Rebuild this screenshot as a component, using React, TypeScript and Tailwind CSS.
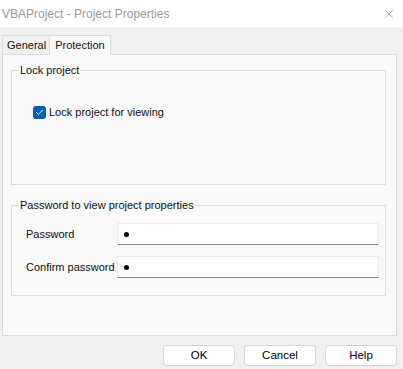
import { Check, X } from "lucide-react";

const font = { fontFamily: "'Liberation Sans', Arial, sans-serif" };

function Field({ label }: { label: string }) {
  return (
    <div className="flex items-center h-[22px]">
      <span className="w-[91px] shrink-0 whitespace-nowrap text-[11px] text-[#111]">{label}</span>
      <div className="flex-1 h-[22px] bg-white border border-[#ececec] border-b-[#8a8a8a] flex items-center pl-[6px]">
        <span className="w-[5px] h-[5px] rounded-full bg-black" />
      </div>
    </div>
  );
}

function Button({ children }: { children: string }) {
  return (
    <button className="w-[72px] h-[21px] bg-white border border-[#d4d4d4] rounded-[4px] text-[11.5px] text-black flex items-center justify-center">
      {children}
    </button>
  );
}

export default function App() {
  return (
    <div className="w-[403px] h-[369px] bg-[#f0f0f0] flex flex-col" style={font}>
      <div className="h-[27px] bg-white flex items-center justify-between pl-[2px] pr-[7px]">
        <span className="text-[12px] text-[#9a9a9a]">VBAProject - Project Properties</span>
        <X className="w-[14px] h-[14px] text-[#8a8a8a]" strokeWidth={1.1} />
      </div>

      <div className="pl-[2px] pr-[6px] pt-[7px]">
        <div className="flex items-end h-[20px]">
          <div className="h-[19px] pl-[4px] pr-[3px] border border-b-0 border-[#dcdcdc] bg-[#f0f0f0] text-[11px] text-[#111] flex items-center">
            General
          </div>
          <div className="h-[20px] px-[5px] border border-b-0 border-l-0 border-[#dcdcdc] bg-[#f9f9f9] text-[11px] text-[#111] flex items-center -mb-px relative z-10">
            Protection
          </div>
        </div>
        <div className="h-[282px] bg-[#f9f9f9] border border-[#dcdcdc] pl-[8px] pr-[10px] pt-[8px] flex flex-col gap-[13px]">
          <fieldset className="border border-[#dcdcdc] h-[122px] px-[8px]">
            <legend className="ml-[-1px] px-[1px] text-[11px] leading-[14px] text-[#111]">Lock project</legend>
            <label className="flex items-center gap-[3px] mt-[27px] ml-[13px] leading-[16px]">
              <span className="w-[13px] h-[13px] rounded-[3px] bg-[#005fb8] flex items-center justify-center">
                <Check className="w-[9px] h-[9px] text-white" strokeWidth={2.5} />
              </span>
              <span className="text-[11px] text-[#111]">Lock project for viewing</span>
            </label>
          </fieldset>

          <fieldset className="border border-[#dcdcdc] h-[98px] pl-[14px] pr-[6px]">
            <legend className="ml-[-7px] px-[1px] text-[11px] leading-[14px] text-[#111]">Password to view project properties</legend>
            <div className="flex flex-col gap-[11px] mt-[11px]">
              <Field label="Password" />
              <Field label="Confirm password" />
            </div>
          </fieldset>
        </div>
      </div>

      <div className="flex justify-end gap-[9px] pr-[6px] pt-[9px]">
        <Button>OK</Button>
        <Button>Cancel</Button>
        <Button>Help</Button>
      </div>
    </div>
  );
}
